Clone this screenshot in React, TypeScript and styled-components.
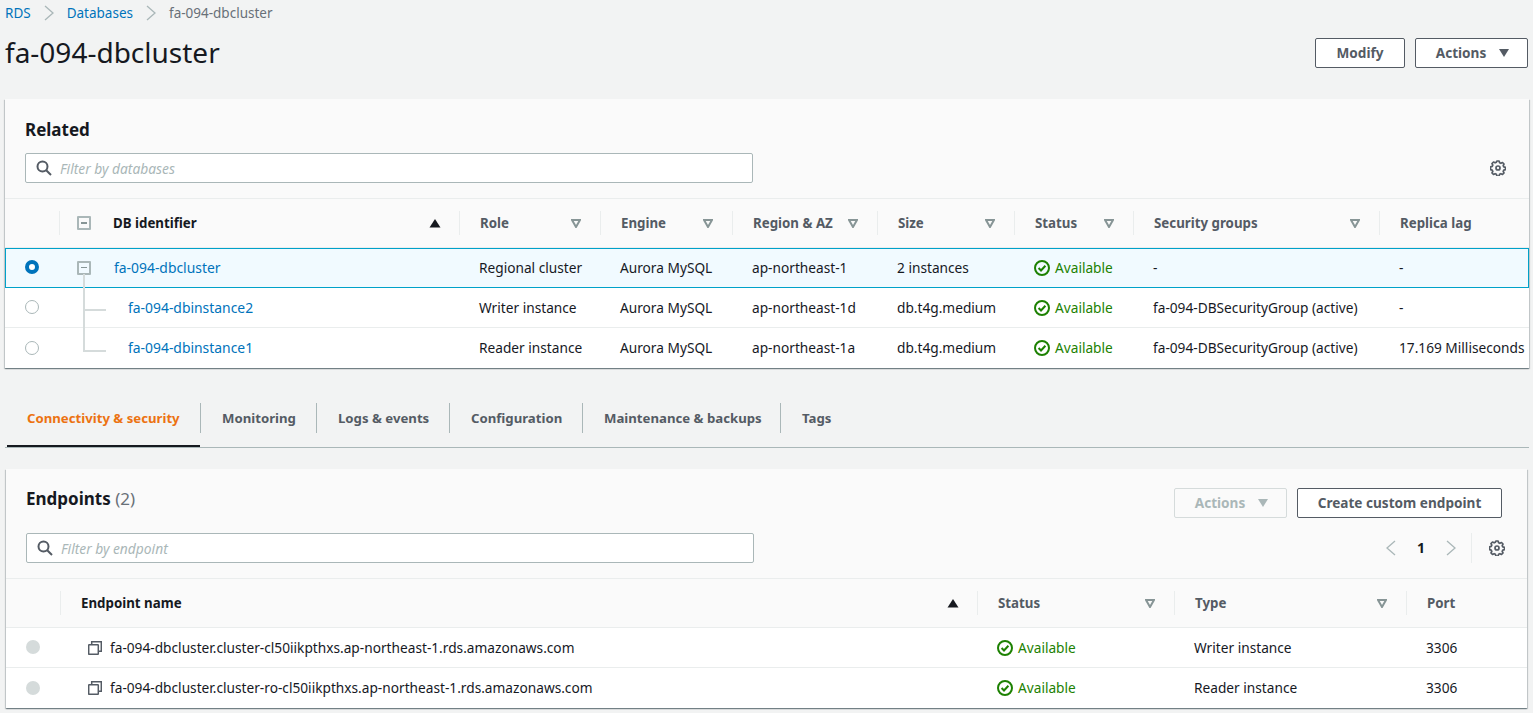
import React from 'react';
import styled, { createGlobalStyle } from 'styled-components';

const GlobalStyle = createGlobalStyle`
  html, body {
    margin: 0;
    padding: 0;
    background: #f2f3f3;
    color: #16191f;
    font-family: 'Noto Sans', 'Open Sans', sans-serif;
    font-size: 14px;
    line-height: 20px;
    overflow: hidden;
  }
  * { box-sizing: border-box; }
`;

const Page = styled.div`
  width: 1533px;
  height: 713px;
  padding: 3px 4px 0 5px;
  overflow: hidden;
`;

const Breadcrumbs = styled.nav`
  display: flex;
  align-items: center;
  height: 20px;
  font-size: 13.5px;
  color: #687078;
`;

const Crumb = styled.a`
  color: #0073bb;
`;

const CrumbSep = styled.span`
  display: flex;
  width: 36px;
  justify-content: center;
`;

const HeaderRow = styled.header`
  display: flex;
  align-items: center;
  justify-content: space-between;
  height: 30px;
  margin-top: 15px;
`;

const Title = styled.h1`
  margin: 0 0 2px;
  font-size: 28px;
  line-height: 28px;
  font-weight: 400;
`;

const ButtonGroup = styled.div<{ $right: number }>`
  display: flex;
  gap: 10px;
  margin-right: ${p => p.$right}px;
`;

const Button = styled.button<{ $w: number; $disabled?: boolean }>`
  display: flex;
  align-items: center;
  justify-content: center;
  gap: 13px;
  width: ${p => p.$w}px;
  height: 30px;
  padding: 0;
  background: ${p => (p.$disabled ? 'transparent' : '#fff')};
  border: 1px solid ${p => (p.$disabled ? '#d5dbdb' : '#545b64')};
  border-radius: 2px;
  color: ${p => (p.$disabled ? '#aab7b8' : '#545b64')};
  font-family: inherit;
  font-size: 13.6px;
  font-weight: 700;
  line-height: 20px;
`;

const ActionsButton = styled(Button)`
  padding-left: 2px;
`;

const Panel = styled.section<{ $inset?: boolean; $top: number }>`
  margin-top: ${p => p.$top}px;
  margin-left: ${p => (p.$inset ? 1 : 0)}px;
  margin-right: ${p => (p.$inset ? 2 : 0)}px;
  background: #fff;
  box-shadow: 0 1px 1px 0 rgba(0, 28, 36, 0.35), 1px 1px 1px 0 rgba(0, 28, 36, 0.15), -1px 1px 1px 0 rgba(0, 28, 36, 0.15);
  overflow: hidden;
`;

const PanelHead = styled.div`
  background: #fafafa;
  border-bottom: 1px solid #eaeded;
  padding: 19px 20px 15px;
`;

const PanelTitleRow = styled.div<{ $h: number; $pad?: number }>`
  display: flex;
  align-items: flex-start;
  justify-content: space-between;
  height: ${p => p.$h}px;
  padding-top: ${p => p.$pad ?? 0}px;
`;

const PanelTitle = styled.h2`
  margin: 0;
  font-size: 17px;
  line-height: 22px;
  font-weight: 700;
`;

const Count = styled.span`
  color: #687078;
  font-weight: 400;
`;

const FilterRow = styled.div`
  display: flex;
  align-items: center;
  justify-content: space-between;
  margin-top: 15px;
`;

const FilterBox = styled.div`
  display: flex;
  align-items: center;
  gap: 8px;
  width: 728px;
  height: 30px;
  padding: 0 10px;
  background: #fff;
  border: 1px solid #aab7b8;
  border-radius: 2px;
  color: #aab7b8;
  font-size: 13.8px;
  font-style: italic;
`;

const FilterText = styled.span`
  padding-top: 1px;
`;

const Tools = styled.div`
  display: flex;
  align-items: center;
`;

const PageNumber = styled.span`
  width: 48px;
  text-align: center;
  font-weight: 700;
`;

const ToolDivider = styled.span`
  width: 1px;
  height: 30px;
  margin: 0 17px 0 14px;
  background: #eaeded;
`;

const GearSlot = styled.span<{ $right: number }>`
  display: flex;
  margin-right: ${p => p.$right}px;
  color: #545b64;
`;

const Row = styled.div<{ $cols: string; $selected?: boolean; $head?: boolean }>`
  display: grid;
  grid-template-columns: ${p => p.$cols};
  align-items: center;
  height: ${p => (p.$head ? 49 : 40)}px;
  background: ${p => (p.$head ? '#fafafa' : p.$selected ? '#f1faff' : '#fff')};
  border-bottom: 1px solid ${p => (p.$selected ? '#00a1c9' : '#eaeded')};
  ${p => p.$selected && 'box-shadow: inset 0 1px 0 #00a1c9, inset 1px 0 0 #00a1c9, inset -1px 0 0 #00a1c9;'}
  &:last-child { border-bottom: 0; }
`;

const HeadCell = styled.div<{ $sorted?: boolean; $first?: boolean; $pad?: number }>`
  display: flex;
  align-items: center;
  justify-content: space-between;
  height: 24px;
  padding: 0 ${p => (p.$sorted ? 18 : 19)}px 0 ${p => p.$pad ?? 20}px;
  border-left: ${p => (p.$first ? '0' : '1px solid #eaeded')};
  color: ${p => (p.$sorted ? '#16191f' : '#545b64')};
  font-size: 13.3px;
  font-weight: 700;
  white-space: nowrap;
  min-width: 0;
  svg { flex: none; }
`;

const HeadLabel = styled.span`
  display: flex;
  align-items: center;
  gap: 22px;
`;

const Cell = styled.div<{ $pad?: number }>`
  display: flex;
  align-items: center;
  padding-left: ${p => p.$pad ?? 20}px;
  font-size: 13.7px;
  white-space: nowrap;
  min-width: 0;
`;

const TreeCell = styled(Cell)<{ $branch?: 'top' | 'last' }>`
  position: relative;
  height: 39px;
  ${p => p.$branch && `
    &::before {
      content: '';
      position: absolute;
      left: 24px;
      top: ${p.$branch === 'top' ? '-14px' : '-20px'};
      width: 21px;
      height: ${p.$branch === 'top' ? '35px' : '41px'};
      border-left: 2px solid #d5dbdb;
      border-bottom: 2px solid #d5dbdb;
    }
  `}
`;

const RadioCell = styled.div`
  display: flex;
  justify-content: center;
  margin-top: -1px;
`;

const Radio = styled.span<{ $state: 'on' | 'off' | 'disabled' }>`
  display: block;
  width: 14px;
  height: 14px;
  border-radius: 50%;
  background: ${p => (p.$state === 'disabled' ? '#d5dbdb' : '#fff')};
  border: ${p => (p.$state === 'on' ? '4px solid #0073bb' : p.$state === 'disabled' ? '0' : '1px solid #aab7b8')};
`;

const Expander = styled.span`
  display: flex;
  align-items: center;
  justify-content: center;
  flex: none;
  width: 14px;
  height: 14px;
  border: 2px solid #aab7b8;
  border-radius: 1px;
  &::after {
    content: '';
    width: 6px;
    height: 1.5px;
    background: #879596;
  }
`;

const ExpanderGap = styled.span`
  width: 23px;
`;

const NameLink = styled.a`
  color: #0073bb;
  font-size: 13.9px;
`;

const StatusOk = styled.span`
  display: flex;
  align-items: center;
  gap: 5px;
  color: #1d8102;
`;

const CopyIcon = styled.span`
  display: flex;
  margin-right: 8px;
  color: #545b64;
`;

const Tabs = styled.div`
  display: flex;
  align-items: stretch;
  height: 50px;
  margin-top: 30px;
  padding-left: 2px;
  border-bottom: 1px solid #aab7b8;
`;

const Tab = styled.div<{ $active?: boolean; $last?: boolean; $w: number }>`
  position: relative;
  width: ${p => p.$w}px;
  padding: 10px 0 0 ${p => (p.$active ? 20 : 22)}px;
  border-bottom: 2px solid ${p => (p.$active ? '#16191f' : 'transparent')};
  color: ${p => (p.$active ? '#ec7211' : '#545b64')};
  font-size: 13.2px;
  font-weight: 700;
  white-space: nowrap;
  &::after {
    content: '';
    display: ${p => (p.$last ? 'none' : 'block')};
    position: absolute;
    top: 5px;
    right: -1px;
    width: 1px;
    height: 30px;
    background: #aab7b8;
  }
`;

const SearchIcon = () => (
  <svg width="16" height="16" viewBox="0 0 16 16" fill="none" stroke="#545b64" strokeWidth="2">
    <circle cx="6.5" cy="6.5" r="5" />
    <path d="M10.2 10.2 15 15" />
  </svg>
);

const GearIcon = () => (
  <svg width="16" height="16" viewBox="0 0 16 16" fill="none" stroke="currentColor" strokeWidth="1.7" strokeLinejoin="round">
    <circle cx="8" cy="8" r="2" />
    <path d="M6.9 1h2.2l.5 1.700 1.300.6 1.600-.8 1.500 1.500-.8 1.600.6 1.300 1.700.5v2.200l-1.700.5-.6 1.300.8 1.600-1.500 1.500-1.600-.8-1.300.6-.5 1.700H6.900l-.5-1.700-1.300-.6-1.600.8-1.500-1.500.8-1.600-.6-1.300-1.700-.5V6.900l1.700-.5.6-1.300-.8-1.600 1.500-1.500 1.600.8 1.300-.6z" />
  </svg>
);

const CaretDown = () => (
  <svg width="10" height="8" viewBox="0 0 10 8" fill="currentColor">
    <path d="M0 0h10L5 8z" />
  </svg>
);

const SortUp = () => (
  <svg width="12" height="9" viewBox="0 0 12 9" fill="#16191f">
    <path d="M6 0l5.500 8.500H.5z" />
  </svg>
);

const SortNone = () => (
  <svg width="10" height="9" viewBox="0 0 10 9" fill="none" stroke="#879596" strokeWidth="2">
    <path d="M1 1h8L5 8z" />
  </svg>
);

const CheckCircle = () => (
  <svg width="16" height="16" viewBox="0 0 16 16" fill="none" stroke="#1d8102" strokeWidth="2">
    <circle cx="8" cy="8" r="7" />
    <path d="M4.600 8l2.400 2.500 4.400-4.800" />
  </svg>
);

const Copy = () => (
  <svg width="14" height="14" viewBox="0 0 14 14" fill="none" stroke="currentColor" strokeWidth="1.500">
    <rect x="0.700" y="3.700" width="9.600" height="9.600" rx="0.500" />
    <path d="M3.700 3.500V.7h9.600v9.600h-2.800" />
  </svg>
);

const Chevron = ({ dir }: { dir: 'left' | 'right' }) => (
  <svg width="12" height="16" viewBox="0 0 12 16" fill="none" stroke="#aab7b8" strokeWidth="1.300">
    <path d={dir === 'right' ? 'M2 1l8 7-8 7' : 'M10 1L2 8l8 7'} />
  </svg>
);

const relatedCols = '54px 400px 141px 132px 145px 137px 119px 246px 150px';
const relatedHeads = ['Role', 'Engine', 'Region & AZ', 'Size', 'Status', 'Security groups', 'Replica lag'];
const relatedRows = [
  { name: 'fa-094-dbinstance2', branch: 'top' as const, role: 'Writer instance', az: 'ap-northeast-1d', size: 'db.t4g.medium', sg: 'fa-094-DBSecurityGroup (active)', lag: '-' },
  { name: 'fa-094-dbinstance1', branch: 'last' as const, role: 'Reader instance', az: 'ap-northeast-1a', size: 'db.t4g.medium', sg: 'fa-094-DBSecurityGroup (active)', lag: '17.169 Milliseconds' },
];

const endpointCols = '54px 917px 197px 232px 121px';
const endpoints = [
  { name: 'fa-094-dbcluster.cluster-cl50iikpthxs.ap-northeast-1.rds.amazonaws.com', type: 'Writer instance' },
  { name: 'fa-094-dbcluster.cluster-ro-cl50iikpthxs.ap-northeast-1.rds.amazonaws.com', type: 'Reader instance' },
];

const tabs = [
  { label: 'Connectivity & security', width: 193 },
  { label: 'Monitoring', width: 116 },
  { label: 'Logs & events', width: 133 },
  { label: 'Configuration', width: 133 },
  { label: 'Maintenance & backups', width: 198 },
  { label: 'Tags', width: 80 },
];

const Available = () => (
  <StatusOk>
    <CheckCircle />
    Available
  </StatusOk>
);

const App = () => {
  return (
    <Page>
      <GlobalStyle />
      <Breadcrumbs>
        <Crumb>RDS</Crumb>
        <CrumbSep>
          <Chevron dir="right" />
        </CrumbSep>
        <Crumb>Databases</Crumb>
        <CrumbSep>
          <Chevron dir="right" />
        </CrumbSep>
        <span>fa-094-dbcluster</span>
      </Breadcrumbs>

      <HeaderRow>
        <Title>fa-094-dbcluster</Title>
        <ButtonGroup $right={1}>
          <Button $w={90}>Modify</Button>
          <ActionsButton $w={113}>
            Actions
            <CaretDown />
          </ActionsButton>
        </ButtonGroup>
      </HeaderRow>

      <Panel $top={31}>
        <PanelHead>
          <PanelTitleRow $h={20} $pad={1}>
            <PanelTitle>Related</PanelTitle>
          </PanelTitleRow>
          <FilterRow>
            <FilterBox>
              <SearchIcon />
              <FilterText>Filter by databases</FilterText>
            </FilterBox>
            <GearSlot $right={3}>
              <GearIcon />
            </GearSlot>
          </FilterRow>
        </PanelHead>

        <Row $cols={relatedCols} $head>
          <div />
          <HeadCell $sorted $pad={17}>
            <HeadLabel>
              <Expander />
              DB identifier
            </HeadLabel>
            <SortUp />
          </HeadCell>
          {relatedHeads.map((h, i) => (
            <HeadCell key={h}>
              {h}
              {i < 6 && <SortNone />}
            </HeadCell>
          ))}
        </Row>

        <Row $cols={relatedCols} $selected>
          <RadioCell>
            <Radio $state="on" />
          </RadioCell>
          <TreeCell $pad={18}>
            <Expander />
            <ExpanderGap />
            <NameLink>fa-094-dbcluster</NameLink>
          </TreeCell>
          <Cell>Regional cluster</Cell>
          <Cell>Aurora MySQL</Cell>
          <Cell>ap-northeast-1</Cell>
          <Cell>2 instances</Cell>
          <Cell>
            <Available />
          </Cell>
          <Cell>-</Cell>
          <Cell>-</Cell>
        </Row>

        {relatedRows.map(r => (
          <Row key={r.name} $cols={relatedCols}>
            <RadioCell>
              <Radio $state="off" />
            </RadioCell>
            <TreeCell $pad={69} $branch={r.branch}>
              <NameLink>{r.name}</NameLink>
            </TreeCell>
            <Cell>{r.role}</Cell>
            <Cell>Aurora MySQL</Cell>
            <Cell>{r.az}</Cell>
            <Cell>{r.size}</Cell>
            <Cell>
              <Available />
            </Cell>
            <Cell>{r.sg}</Cell>
            <Cell>{r.lag}</Cell>
          </Row>
        ))}
      </Panel>

      <Tabs>
        {tabs.map((t, i) => (
          <Tab key={t.label} $active={i === 0} $last={i === tabs.length - 1} $w={t.width}>
            {t.label}
          </Tab>
        ))}
      </Tabs>

      <Panel $inset $top={21}>
        <PanelHead>
          <PanelTitleRow $h={30}>
            <PanelTitle>
              Endpoints <Count>(2)</Count>
            </PanelTitle>
            <ButtonGroup $right={5}>
              <ActionsButton $w={113} $disabled>
                Actions
                <CaretDown />
              </ActionsButton>
              <Button $w={205}>Create custom endpoint</Button>
            </ButtonGroup>
          </PanelTitleRow>
          <FilterRow>
            <FilterBox>
              <SearchIcon />
              <FilterText>Filter by endpoint</FilterText>
            </FilterBox>
            <Tools>
              <Chevron dir="left" />
              <PageNumber>1</PageNumber>
              <Chevron dir="right" />
              <ToolDivider />
              <GearSlot $right={2}>
                <GearIcon />
              </GearSlot>
            </Tools>
          </FilterRow>
        </PanelHead>

        <Row $cols={endpointCols} $head>
          <div />
          <HeadCell $sorted>
            Endpoint name
            <SortUp />
          </HeadCell>
          <HeadCell>
            Status
            <SortNone />
          </HeadCell>
          <HeadCell>
            Type
            <SortNone />
          </HeadCell>
          <HeadCell>Port</HeadCell>
        </Row>

        {endpoints.map(e => (
          <Row key={e.name} $cols={endpointCols}>
            <RadioCell>
              <Radio $state="disabled" />
            </RadioCell>
            <Cell $pad={28}>
              <CopyIcon>
                <Copy />
              </CopyIcon>
              {e.name}
            </Cell>
            <Cell>
              <Available />
            </Cell>
            <Cell>{e.type}</Cell>
            <Cell>3306</Cell>
          </Row>
        ))}
      </Panel>
    </Page>
  );
};

export default App;
